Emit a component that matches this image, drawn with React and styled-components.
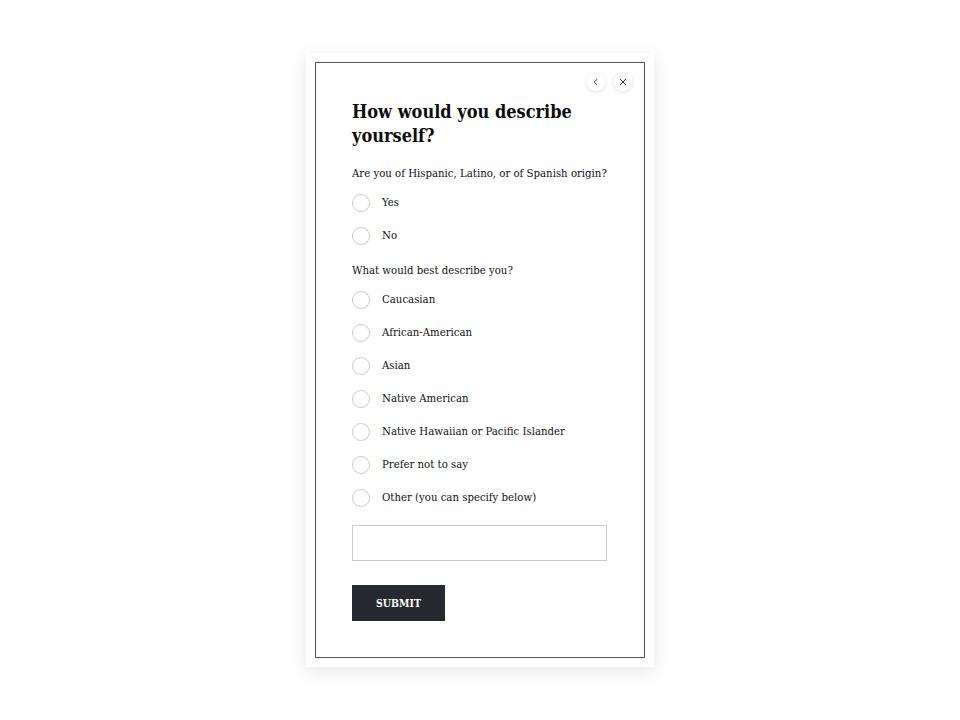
import React from "react";
import styled, { createGlobalStyle } from "styled-components";

const GlobalStyle = createGlobalStyle`
  html, body {
    margin: 0;
    padding: 0;
    background: #ffffff;
  }
  body {
    font-family: "DejaVu Serif Condensed", "DejaVu Serif", "Liberation Serif", serif;
    font-stretch: semi-condensed;
    color: #111;
  }
`;

const ethnicity = [
  "Caucasian",
  "African-American",
  "Asian",
  "Native American",
  "Native Hawaiian or Pacific Islander",
  "Prefer not to say",
  "Other (you can specify below)",
];

const App = () => {
  return (
    <>
      <GlobalStyle />
      <Page>
        <Card>
          <Frame>
            <Controls>
              <RoundButton aria-label="Back">
                <svg width="8" height="8" viewBox="0 0 8 8" fill="none">
                  <path d="M5 1.2L2.2 4L5 6.8" stroke="#333" strokeWidth="1" />
                </svg>
              </RoundButton>
              <RoundButton aria-label="Close">
                <svg width="8" height="8" viewBox="0 0 8 8" fill="none">
                  <path d="M1 1L7 7M7 1L1 7" stroke="#333" strokeWidth="1" />
                </svg>
              </RoundButton>
            </Controls>
            <Title>How would you describe yourself?</Title>
            <Question>Are you of Hispanic, Latino, or of Spanish origin?</Question>
            <Options>
              <Option>
                <Radio type="radio" name="hispanic" />
                <span>Yes</span>
              </Option>
              <Option>
                <Radio type="radio" name="hispanic" />
                <span>No</span>
              </Option>
            </Options>
            <Question>What would best describe you?</Question>
            <Options>
              {ethnicity.map((label) => (
                <Option key={label}>
                  <Radio type="radio" name="ethnicity" />
                  <span>{label}</span>
                </Option>
              ))}
            </Options>
            <TextInput type="text" />
            <Submit>SUBMIT</Submit>
          </Frame>
        </Card>
      </Page>
    </>
  );
};

export default App;

const Page = styled.div`
  width: 960px;
  height: 720px;
  display: flex;
  justify-content: center;
  padding-top: 53px;
  box-sizing: border-box;
`;

const Card = styled.div`
  width: 348px;
  height: 614px;
  padding: 9px;
  box-sizing: border-box;
  background: #fff;
  box-shadow: 0 4px 16px rgba(0, 0, 0, 0.1);
`;

const Frame = styled.div`
  position: relative;
  height: 100%;
  box-sizing: border-box;
  border: 1px solid #555;
  padding: 37px 36px 0 36px;
  display: flex;
  flex-direction: column;
  align-items: flex-start;
`;

const Controls = styled.div`
  position: absolute;
  top: 10px;
  right: 12px;
  display: flex;
  gap: 9px;
`;

const RoundButton = styled.button`
  width: 18px;
  height: 18px;
  border-radius: 50%;
  border: none;
  padding: 0;
  background: #fff;
  box-shadow: 0 1px 5px rgba(0, 0, 0, 0.12);
  display: flex;
  align-items: center;
  justify-content: center;
  cursor: pointer;
`;

const Title = styled.h1`
  margin: 0 0 17px;
  font-size: 18px;
  line-height: 24px;
  font-weight: 700;
  color: #0d0d0d;
`;

const Question = styled.p`
  margin: 0 0 11px;
  font-size: 11.3px;
  line-height: 18px;
  color: #111;
`;

const Options = styled.div`
  display: flex;
  flex-direction: column;
  gap: 15px;
  margin-bottom: 17px;
`;

const Option = styled.label`
  display: flex;
  align-items: center;
  gap: 12px;
  font-size: 11.3px;
  line-height: 18px;
  color: #111;
  cursor: pointer;
`;

const Radio = styled.input`
  appearance: none;
  width: 18px;
  height: 18px;
  margin: 0;
  border-radius: 50%;
  border: 1px solid #ccc;
  background: #fff;

  &:checked {
    border: 5px solid #262a30;
  }
`;

const TextInput = styled.input`
  width: 255px;
  height: 36px;
  box-sizing: border-box;
  border: 1px solid #ccc;
  margin: 1px 0 24px;
  font-family: inherit;
`;

const Submit = styled.button`
  width: 93px;
  height: 36px;
  border: none;
  background: #262a30;
  color: #fff;
  font-family: inherit;
  font-weight: 700;
  font-size: 10.5px;
  cursor: pointer;
`;
